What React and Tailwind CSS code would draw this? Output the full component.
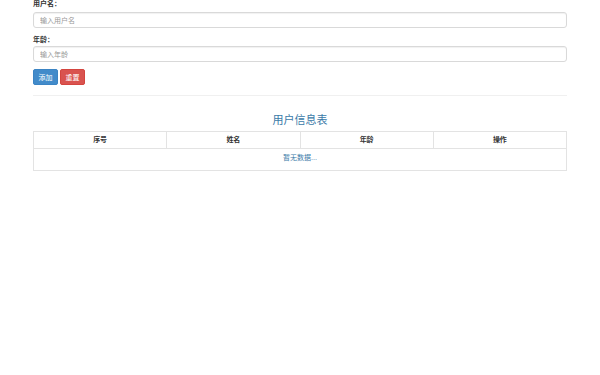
export default function App() {
  const font = { fontFamily: '"Liberation Sans", "Noto Sans CJK SC", sans-serif' };
  return (
    <div className="w-[600px] h-[375px] bg-white" style={font}>
      <div className="mx-[33px] w-[534px]">
        <div className="flex flex-col">
          <label className="block h-[10px] text-[7px] leading-[9px] font-bold text-[#333] -mt-[1px] mb-[3px]">用户名：</label>
          <input
            className="block h-[16px] w-full rounded-[3px] border border-[#d9d9d9] px-[6px] text-[7px] text-[#555] placeholder-[#999] outline-none shadow-[inset_0_1px_1px_rgba(0,0,0,0.06)]"
            placeholder="输入用户名"
          />
          <label className="block h-[10px] text-[7px] leading-[10px] font-bold text-[#333] mt-[7px] mb-[1px]">年龄：</label>
          <input
            className="block h-[16px] w-full rounded-[3px] border border-[#d9d9d9] px-[6px] text-[7px] text-[#555] placeholder-[#999] outline-none shadow-[inset_0_1px_1px_rgba(0,0,0,0.06)]"
            placeholder="输入年龄"
          />
          <div className="flex gap-[2px] mt-[7px]">
            <button className="h-[16px] w-[25px] rounded-[2px] bg-[#428bca] border border-[#3b84c4] text-white text-[7px] leading-none">添加</button>
            <button className="h-[16px] w-[25px] rounded-[2px] bg-[#d9534f] border border-[#d4453f] text-white text-[7px] leading-none">重置</button>
          </div>
          <div className="mt-[10px] border-t border-[#f0f0f0]" />
          <h2 className="mt-[17px] text-center text-[11px] leading-[15px] text-[#3b7aa8]">用户信息表</h2>
          <table className="mt-[3px] w-full border-collapse border border-[#e3e3e3] table-fixed">
            <thead>
              <tr className="h-[17px]">
                <th className="border border-[#e3e3e3] text-[7px] font-bold text-[#333]">序号</th>
                <th className="border border-[#e3e3e3] text-[7px] font-bold text-[#333]">姓名</th>
                <th className="border border-[#e3e3e3] text-[7px] font-bold text-[#333]">年龄</th>
                <th className="border border-[#e3e3e3] text-[7px] font-bold text-[#333]">操作</th>
              </tr>
            </thead>
            <tbody>
              <tr className="h-[22px]">
                <td colSpan={4} className="border border-[#e3e3e3] text-center text-[7px] text-[#3b7aa8] align-top pt-[4px]">暂无数据...</td>
              </tr>
            </tbody>
          </table>
        </div>
      </div>
    </div>
  );
}
